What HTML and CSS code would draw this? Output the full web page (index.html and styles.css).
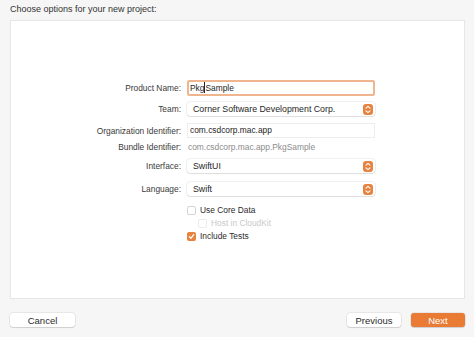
FILE: index.html
```html
<!DOCTYPE html>
<html lang="en">
<head>
    <meta charset="UTF-8">
    <title>New Project Options</title>
    <link rel="stylesheet" href="styles.css">
</head>
<body>
    <div class="sheet">
        <div class="sheet-title">Choose options for your new project:</div>

        <div class="options-panel">
            <div class="form">
                <div class="row row-product">
                    <label class="label">Product Name:</label>
                    <div class="field focused">Pkg<span class="caret"></span>Sample</div>
                </div>
                <div class="row row-team">
                    <label class="label">Team:</label>
                    <div class="popup">
                        <span>Corner Software Development Corp.</span>
                        <span class="stepper">
                            <svg viewBox="0 0 10 11" width="10" height="11"><path d="M3 4.2 L5 2.4 L7 4.2 M3 6.8 L5 8.6 L7 6.8" fill="none" stroke="#fff" stroke-width="1.1" stroke-linecap="round" stroke-linejoin="round"/></svg>
                        </span>
                    </div>
                </div>
                <div class="row row-org">
                    <label class="label">Organization Identifier:</label>
                    <div class="field">com.csdcorp.mac.app</div>
                </div>
                <div class="row row-bundle">
                    <label class="label">Bundle Identifier:</label>
                    <div class="value-muted">com.csdcorp.mac.app.PkgSample</div>
                </div>
                <div class="row row-interface">
                    <label class="label">Interface:</label>
                    <div class="popup">
                        <span>SwiftUI</span>
                        <span class="stepper">
                            <svg viewBox="0 0 10 11" width="10" height="11"><path d="M3 4.2 L5 2.4 L7 4.2 M3 6.8 L5 8.6 L7 6.8" fill="none" stroke="#fff" stroke-width="1.1" stroke-linecap="round" stroke-linejoin="round"/></svg>
                        </span>
                    </div>
                </div>
                <div class="row row-language">
                    <label class="label">Language:</label>
                    <div class="popup">
                        <span>Swift</span>
                        <span class="stepper">
                            <svg viewBox="0 0 10 11" width="10" height="11"><path d="M3 4.2 L5 2.4 L7 4.2 M3 6.8 L5 8.6 L7 6.8" fill="none" stroke="#fff" stroke-width="1.1" stroke-linecap="round" stroke-linejoin="round"/></svg>
                        </span>
                    </div>
                </div>
                <div class="row row-check">
                    <span class="label"></span>
                    <div class="check-item">
                        <span class="checkbox"></span>
                        <span>Use Core Data</span>
                    </div>
                </div>
                <div class="row row-check">
                    <span class="label"></span>
                    <div class="check-item indented disabled">
                        <span class="checkbox"></span>
                        <span>Host in CloudKit</span>
                    </div>
                </div>
                <div class="row row-check">
                    <span class="label"></span>
                    <div class="check-item">
                        <span class="checkbox checked">
                            <svg viewBox="0 0 10 10" width="10" height="10"><path d="M2.6 5.2 L4.3 7 L7.5 2.8" fill="none" stroke="#fff" stroke-width="1.4" stroke-linecap="round" stroke-linejoin="round"/></svg>
                        </span>
                        <span>Include Tests</span>
                    </div>
                </div>
            </div>
        </div>

        <div class="buttons">
            <button class="btn">Cancel</button>
            <div class="buttons-right">
                <button class="btn btn-previous">Previous</button>
                <button class="btn btn-primary">Next</button>
            </div>
        </div>
    </div>
</body>
</html>
```

FILE: styles.css
```css
/* Sheet layout */
body {
    margin: 0;
    background: #f6f6f6;
    font-family: 'Liberation Sans', Arial, sans-serif;
    font-size: 8.4px;
    color: #2b2b2b;
}

.sheet {
    width: 474px;
    height: 337px;
    padding: 4px 9px 0 10px;
    box-sizing: border-box;
}

.sheet-title {
    height: 16px;
    line-height: 11px;
    font-size: 9px;
    color: #333;
}

.options-panel {
    height: 279px;
    box-sizing: border-box;
    background: #fff;
    border: 1px solid #e6e6e6;
    box-shadow: 0 0 1px rgba(0,0,0,0.04);
    padding-top: 59px;
}

/* Form rows */
.form {
    display: flex;
    flex-direction: column;
}

.row {
    display: flex;
    align-items: center;
}

.label {
    width: 176px;
    text-align: right;
    padding-right: 6px;
    box-sizing: border-box;
    flex-shrink: 0;
    color: #3a3a3a;
}

.row-product { height: 16px; }
.row-team { height: 14px; margin-top: 6px; }
.row-org { height: 15px; margin-top: 7px; }
.row-bundle { height: 12px; margin-top: 3px; }
.row-interface { height: 14px; margin-top: 6px; }
.row-language { height: 14px; margin-top: 9px; }
.row-check { height: 12px; margin-top: 1px; }
.row-language + .row-check { margin-top: 8px; }

.field {
    width: 188px;
    height: 15px;
    box-sizing: border-box;
    background: #fff;
    border: 1px solid #ededed;
    padding-left: 2px;
    line-height: 13px;
    color: #262626;
}

.field.focused {
    height: 16px;
    border: 2px solid #efb58f;
    border-radius: 2px;
    padding-left: 1px;
    line-height: 12px;
}

.caret {
    display: inline-block;
    width: 1px;
    height: 11px;
    background: #222;
    vertical-align: -2px;
}

.value-muted {
    padding-left: 1px;
    color: #8c8c8c;
}

.popup {
    width: 188px;
    height: 14px;
    box-sizing: border-box;
    display: flex;
    align-items: center;
    justify-content: space-between;
    padding: 0 2px 0 6px;
    background: #fff;
    border-radius: 3px;
    box-shadow: 0 0 0 0.5px rgba(0,0,0,0.12), 0 1px 1px rgba(0,0,0,0.08);
    color: #262626;
    font-size: 8.8px;
}

.stepper {
    width: 10px;
    height: 11px;
    border-radius: 3px;
    background: #e8823f;
    display: flex;
}

/* Checkboxes */
.check-item {
    display: flex;
    align-items: center;
    gap: 4px;
    color: #2b2b2b;
}

.check-item.indented {
    margin-left: 11px;
}

.check-item.disabled {
    color: #c9c9c9;
}

.checkbox {
    width: 9px;
    height: 9px;
    box-sizing: border-box;
    border: 1px solid #d4d4d4;
    border-radius: 2px;
    background: #fff;
    display: flex;
}

.disabled .checkbox {
    border-color: #ececec;
}

.checkbox.checked {
    border: none;
    background: #e8823f;
}

.checkbox svg {
    width: 9px;
    height: 9px;
}

/* Bottom buttons */
.buttons {
    display: flex;
    justify-content: space-between;
    margin-top: 14px;
}

.buttons-right {
    display: flex;
    gap: 10px;
}

.btn {
    height: 14px;
    padding: 0;
    border: none;
    border-radius: 3px;
    background: #fff;
    box-shadow: 0 0 0 0.5px rgba(0,0,0,0.12), 0 1px 1px rgba(0,0,0,0.1);
    font-family: 'Liberation Sans', Arial, sans-serif;
    font-size: 9.5px;
    color: #2b2b2b;
    width: 65px;
}

.btn-previous {
    width: 54px;
}

.btn-primary {
    width: 54px;
    background: #e97b34;
    color: #fff;
}
```
